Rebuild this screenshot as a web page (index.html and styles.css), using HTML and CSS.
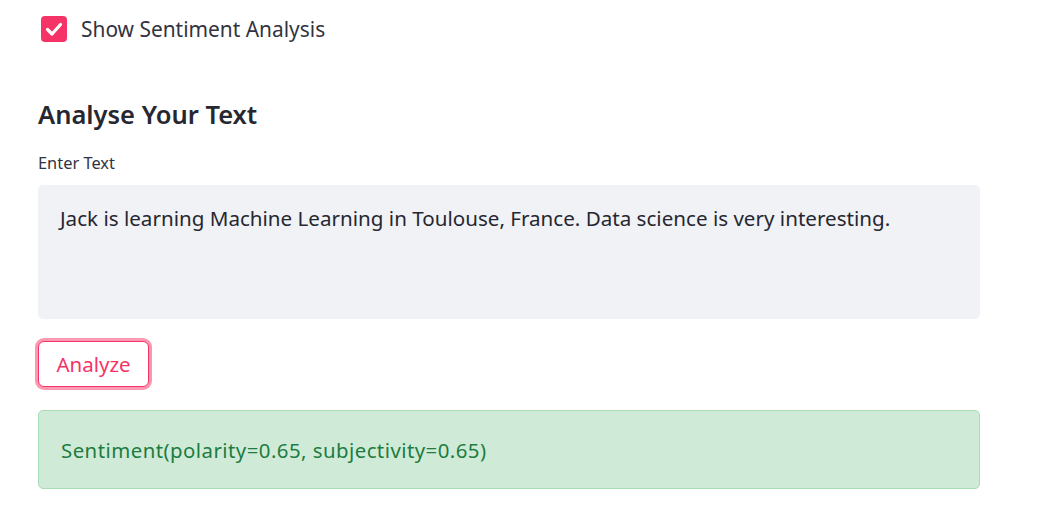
FILE: index.html
```html
<!DOCTYPE html>
<html lang="en">
<head>
<meta charset="utf-8">
<title>Sentiment Analysis</title>
<link rel="stylesheet" href="styles.css">
</head>
<body>
<main class="main">
  <label class="checkbox">
    <span class="box">
      <svg viewBox="0 0 26 26" width="26" height="26" aria-hidden="true">
        <path d="M6.5 13.5 L11 18 L19.5 8.5" fill="none" stroke="#ffffff" stroke-width="3.2" stroke-linecap="round" stroke-linejoin="round"/>
      </svg>
    </span>
    <span class="checkbox-label">Show Sentiment Analysis</span>
  </label>

  <h3 class="heading">Analyse Your Text</h3>

  <div class="field">
    <div class="field-label">Enter Text</div>
    <div class="textarea">Jack is learning Machine Learning in Toulouse, France. Data science is very interesting.</div>
  </div>

  <div class="actions">
    <button class="btn" type="button">Analyze</button>
  </div>

  <div class="alert">Sentiment(polarity=0.65, subjectivity=0.65)</div>
</main>
</body>
</html>
```

FILE: styles.css
```css
* { box-sizing: border-box; }

html, body {
  margin: 0;
  padding: 0;
  background: #ffffff;
}

body {
  font-family: "Noto Sans", "Open Sans", sans-serif;
  color: #262730;
}

.main {
  width: 942px;
  margin-left: 38px;
  display: flex;
  flex-direction: column;
}

.checkbox {
  display: flex;
  align-items: center;
  gap: 14px;
  margin-top: 16px;
  margin-left: 3px;
  height: 26px;
}

.box {
  width: 26px;
  height: 26px;
  border-radius: 4px;
  background: #f63366;
  display: flex;
}

.checkbox-label {
  font-size: 20.9px;
  color: #31333f;
  line-height: 26px;
}

.heading {
  margin: 56px 0 0 0;
  font-size: 25.5px;
  font-weight: 600;
  line-height: 32px;
  color: #262730;
}

.field {
  margin-top: 22px;
  display: flex;
  flex-direction: column;
}

.field-label {
  font-size: 16.4px;
  line-height: 22px;
  color: #31333f;
}

.textarea {
  margin-top: 11px;
  height: 134px;
  background: #f0f2f6;
  border-radius: 5px;
  padding: 19px 22px;
  font-size: 20.6px;
  line-height: 28px;
  color: #262730;
}

.actions {
  margin-top: 22px;
  display: flex;
}

.btn {
  font-family: inherit;
  font-size: 20.5px;
  color: #f63366;
  background: #ffffff;
  border: 1px solid #f63366;
  border-radius: 6px;
  width: 111px;
  height: 46px;
  padding: 0;
  box-shadow: 0 0 0 3px rgba(246, 51, 102, 0.5);
}

.alert {
  margin-top: 23px;
  height: 79px;
  background: #cfebd7;
  border: 1px solid #a8dcb6;
  border-radius: 5px;
  padding: 0 22px;
  display: flex;
  align-items: center;
  font-size: 20.4px;
  letter-spacing: 0.45px;
  color: #1d7c3f;
}
```
